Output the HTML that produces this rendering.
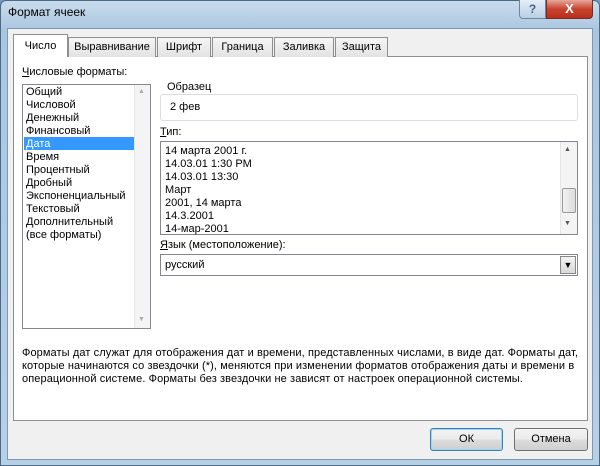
<!DOCTYPE html>
<html><head><meta charset="utf-8"><style>
*{margin:0;padding:0;box-sizing:border-box}
body{width:600px;height:466px;overflow:hidden;background:#6f9fc4;font-family:"Liberation Sans","DejaVu Sans",sans-serif;font-size:11px;color:#000;position:relative}
.abs{position:absolute}
#frame{left:0;top:0;width:600px;height:466px;background:linear-gradient(#c9dcec,#a9c6e0 30px,#b6d0e6);border:1px solid #4a6a88;border-radius:6px 6px 0 0}
#title{left:8px;top:5px;font-size:12px;color:#000}
#client{left:7px;top:28px;width:586px;height:432px;background:#f0f0f0;border:1px solid #7f98b0}
.tab{top:37px;height:20px;background:linear-gradient(#f6f6f6,#e3e3e3);border:1px solid #8e8f8f;border-bottom:none;text-align:center;line-height:18px;font-size:11px}
#panel{left:13px;top:56px;width:575px;height:365px;background:#fff;border:1px solid #8e8f8f}
.lb{background:#fff;border:1px solid #828790}
.it{position:absolute;left:3px;line-height:13px;font-size:11px}
.btn{top:428px;height:23px;border:1px solid #707070;border-radius:3px;background:linear-gradient(#f2f2f2,#ebebeb 50%,#dddddd 51%,#cfcfcf);text-align:center;line-height:21px;font-size:11px}
</style></head><body>
<div id="frame" class="abs"></div>
<div id="title" class="abs">Формат ячеек</div>
<div class="abs" style="left:519px;top:0;width:27px;height:19px;border:1px solid #6d86a0;border-top:none;border-radius:0 0 0 4px;background:linear-gradient(#e4eef7,#b9cfe3);text-align:center;color:#4a6380;font-weight:bold;font-size:12px;line-height:18px">?</div>
<div class="abs" style="left:546px;top:0;width:47px;height:19px;border:1px solid #7a2a22;border-top:none;border-radius:0 0 4px 0;background:linear-gradient(#e8a79b,#c8432f 50%,#b8301c);text-align:center;color:#fff;font-weight:bold;font-size:13px;line-height:18px">X</div>
<div id="client" class="abs"></div>
<div id="panel" class="abs"></div>
<div class="tab abs" style="left:68px;width:88px">Выравнивание</div>
<div class="tab abs" style="left:157px;width:54px">Шрифт</div>
<div class="tab abs" style="left:212px;width:61px">Граница</div>
<div class="tab abs" style="left:274px;width:60px">Заливка</div>
<div class="tab abs" style="left:335px;width:53px">Защита</div>
<div class="tab abs" style="left:13px;top:34px;width:55px;height:23px;background:#fff;line-height:22px">Число</div>
<div class="abs" style="left:22px;top:66px"><u>Ч</u>исловые форматы:</div>
<div class="abs lb" style="left:22px;top:84px;width:129px;height:245px">
<div class="abs" style="left:1px;top:52px;width:110px;height:13px;background:#3399ff"></div>
<div class="it" style="top:1px">Общий</div>
<div class="it" style="top:14px">Числовой</div>
<div class="it" style="top:27px">Денежный</div>
<div class="it" style="top:40px">Финансовый</div>
<div class="it" style="top:53px;color:#fff">Дата</div>
<div class="it" style="top:66px">Время</div>
<div class="it" style="top:79px">Процентный</div>
<div class="it" style="top:92px">Дробный</div>
<div class="it" style="top:105px">Экспоненциальный</div>
<div class="it" style="top:118px">Текстовый</div>
<div class="it" style="top:131px">Дополнительный</div>
<div class="it" style="top:144px">(все форматы)</div>
<div class="abs" style="left:111px;top:0;width:16px;height:243px;background:#f4f4f4;border-left:1px solid #e6e6e6"></div>
<div class="abs" style="left:115px;top:3px;font-size:7px;color:#aaa">▲</div>
<div class="abs" style="left:115px;top:231px;font-size:7px;color:#aaa">▼</div>
</div>
<div class="abs" style="left:160px;top:94px;width:418px;height:27px;border:1px solid #dcdcdc;border-radius:3px"></div>
<div class="abs" style="left:165px;top:81px;background:#fff;padding:0 2px">Образец</div>
<div class="abs" style="left:170px;top:101px">2 фев</div>
<div class="abs" style="left:160px;top:126px"><u>Т</u>ип:</div>
<div class="abs lb" style="left:160px;top:141px;width:418px;height:94px">
<div class="it" style="top:3px;left:4px">14 марта 2001 г.</div>
<div class="it" style="top:16px;left:4px">14.03.01 1:30 PM</div>
<div class="it" style="top:29px;left:4px">14.03.01 13:30</div>
<div class="it" style="top:42px;left:4px">Март</div>
<div class="it" style="top:55px;left:4px">2001, 14 марта</div>
<div class="it" style="top:68px;left:4px">14.3.2001</div>
<div class="it" style="top:81px;left:4px">14-мар-2001</div>
<div class="abs" style="left:399px;top:0;width:17px;height:92px;background:#f4f4f4;border-left:1px solid #e6e6e6"></div>
<div class="abs" style="left:403px;top:4px;font-size:7px;color:#555">▲</div>
<div class="abs" style="left:401px;top:46px;width:14px;height:25px;border:1px solid #999;border-radius:2px;background:linear-gradient(90deg,#f2f2f2,#dcdcdc)"></div>
<div class="abs" style="left:403px;top:78px;font-size:7px;color:#555">▼</div>
</div>
<div class="abs" style="left:160px;top:239px"><u>Я</u>зык (местоположение):</div>
<div class="abs lb" style="left:160px;top:254px;width:418px;height:22px">
<div class="abs" style="left:4px;top:4px">русский</div>
<div class="abs" style="left:399px;top:1px;width:16px;height:18px;border:1px solid #888;background:linear-gradient(#f3f3f3,#d8d8d8);font-size:9px;text-align:center;line-height:17px">▼</div>
</div>
<div class="abs" style="left:22px;top:347px;width:570px;line-height:13px;letter-spacing:0.1px">Форматы дат служат для отображения дат и времени, представленных числами, в виде дат. Форматы дат,<br>которые начинаются со звездочки (*), меняются при изменении форматов отображения даты и времени в<br>операционной системе. Форматы без звездочки не зависят от настроек операционной системы.</div>
<div class="btn abs" style="left:430px;width:73px;border-color:#3c7fb1;box-shadow:inset 0 0 0 1px #9ad6f5">ОК</div>
<div class="btn abs" style="left:514px;width:74px">Отмена</div>
</body></html>
